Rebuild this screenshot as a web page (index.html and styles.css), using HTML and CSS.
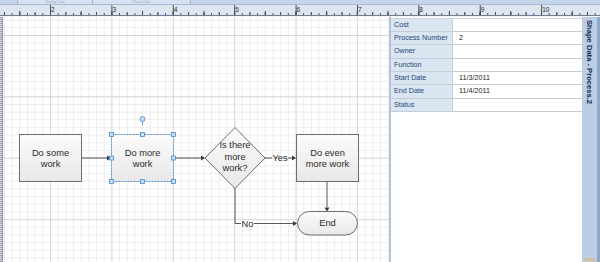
FILE: index.html
```html
<!DOCTYPE html>
<html>
<head>
<meta charset="utf-8">
<link rel="stylesheet" href="styles.css">
</head>
<body>
<div class="app">
  <div class="tabstrip">
    <div class="tab tab-a"><span>Display Data</span></div>
    <div class="tab tab-b"><span>Shape Data</span></div>
  </div>
  <div class="ruler">
    <div class="ruler-labels">
      <span>2</span><span>3</span><span>4</span><span>5</span><span>6</span><span>7</span><span>8</span><span>9</span><span>10</span>
    </div>
  </div>
  <div class="main">
    <div class="vruler"></div>
    <div class="canvas">
      <svg class="diagram" width="386" height="245" viewBox="3 17 386 245" xmlns="http://www.w3.org/2000/svg">
        <defs>
          <linearGradient id="fill" x1="0" y1="0" x2="0" y2="1">
            <stop offset="0" stop-color="#fbfbfb"/>
            <stop offset="1" stop-color="#e8e8e8"/>
          </linearGradient>
        </defs>
        <g class="conn">
          <line x1="81" y1="158" x2="107" y2="158"/>
          <line x1="173" y1="158" x2="201" y2="158"/>
          <line x1="265" y1="158" x2="272" y2="158"/>
          <line x1="288" y1="158" x2="292" y2="158"/>
          <line x1="327" y1="181" x2="327" y2="207"/>
          <polyline points="235,188 235,223.5 241,223.5"/>
          <line x1="254" y1="223.5" x2="293" y2="223.5"/>
        </g>
        <g class="arrow">
          <polygon points="107,155.5 111,158 107,160.5"/>
          <polygon points="201,155.5 205,158 201,160.5"/>
          <polygon points="292,155.5 296,158 292,160.5"/>
          <polygon points="324.5,207.5 327,211.5 329.5,207.5"/>
          <polygon points="293,221 297,223.5 293,226"/>
        </g>
        <rect class="shape" x="19.5" y="134.5" width="62" height="47"/>
        <rect class="shape sel" x="111.5" y="134.5" width="62" height="47"/>
        <polygon class="shape" points="235,127.5 265,158 235,188.5 205,158"/>
        <rect class="shape" x="296.5" y="134.5" width="62" height="47"/>
        <rect class="shape" x="297.5" y="211.5" width="60" height="23.5" rx="11.75" ry="11.75"/>

        <g class="label">
          <text x="50.5" y="155.8">Do some</text>
          <text x="50.5" y="167.2">work</text>
          <text x="142.5" y="155.8">Do more</text>
          <text x="142.5" y="167.2">work</text>
          <text x="235" y="147.8">Is there</text>
          <text x="235" y="159.6">more</text>
          <text x="235" y="171.2">work?</text>
          <text x="327.5" y="155.6">Do even</text>
          <text x="327.5" y="167">more work</text>
          <text x="327.5" y="226">End</text>
          <text x="280" y="161.4">Yes</text>
          <text x="247.5" y="226.8">No</text>
        </g>

        <g class="handles">
          <line class="stem" x1="142.5" y1="121.5" x2="142.5" y2="125"/>
          <circle cx="142.5" cy="119" r="2.5"/>
          <rect x="109.5" y="132.5" width="4" height="4"/>
          <rect x="140.5" y="132.5" width="4" height="4"/>
          <rect x="171.5" y="132.5" width="4" height="4"/>
          <rect x="109.5" y="156" width="4" height="4"/>
          <rect x="171.5" y="156" width="4" height="4"/>
          <rect x="109.5" y="179.5" width="4" height="4"/>
          <rect x="140.5" y="179.5" width="4" height="4"/>
          <rect x="171.5" y="179.5" width="4" height="4"/>
        </g>
      </svg>
    </div>
    <div class="panel">
      <div class="props">
        <div class="key">Cost</div><div class="val"></div>
        <div class="key">Process Number</div><div class="val">2</div>
        <div class="key">Owner</div><div class="val"></div>
        <div class="key">Function</div><div class="val"></div>
        <div class="key">Start Date</div><div class="val">11/3/2011</div>
        <div class="key">End Date</div><div class="val">11/4/2011</div>
        <div class="key">Status</div><div class="val"></div>
      </div>
    </div>
    <div class="sidebar">
      <span class="sidebar-title">Shape Data - Process.2</span>
      <span class="grip"></span>
    </div>
  </div>
</div>
</body>
</html>
```

FILE: styles.css
```css
html, body {
  margin: 0;
  padding: 0;
  background: #ffffff;
}

.app {
  width: 600px;
  height: 262px;
  overflow: hidden;
  display: flex;
  flex-direction: column;
  font-family: "Liberation Sans", Arial, sans-serif;
}

.tabstrip {
  height: 5px;
  flex: none;
  display: flex;
  background: #c5d5e9;
  padding-left: 17px;
  box-sizing: border-box;
  border-bottom: 1px solid #a9bbd3;
}

.tab {
  height: 4px;
  background: #d6e2f1;
  border-right: 1px solid #9fb2cc;
  color: #9aa9be;
  font-size: 3.4px;
  line-height: 4px;
  text-align: center;
  white-space: nowrap;
}
.tab span {
  display: block;
}
.tab-a { width: 74px; border-left: 1px solid #9fb2cc; }
.tab-b { width: 97px; }

.ruler {
  height: 10px;
  flex: none;
  border-bottom: 1px solid #6f7c8e;
  background-color: #dde6f0;
  background-image:
    linear-gradient(to right, #4a4a4a 1px, transparent 1px),
    linear-gradient(to right, #4a4a4a 1px, transparent 1px),
    linear-gradient(to right, #4a4a4a 1px, transparent 1px),
    linear-gradient(to right, #4a4a4a 1px, transparent 1px);
  background-size: 61.4px 100%, 30.7px 4px, 15.35px 3px, 7.675px 2px;
  background-position: 50px 0, 50px 100%, 50px 100%, 50px 100%;
  background-repeat: repeat-x;
}

.ruler-labels {
  display: flex;
  padding-left: 51px;
  height: 10px;
}
.ruler-labels span {
  flex: none;
  width: 61.4px;
  font-size: 6.5px;
  line-height: 7px;
  color: #2a2a2a;
  padding-top: 0.5px;
}

.main {
  flex: 1;
  display: flex;
  border-top: 1px solid #f2f5f9;
  min-height: 0;
}

.vruler {
  width: 2px;
  flex: none;
  border-right: 1px solid #8e98a6;
  background-image: repeating-linear-gradient(to bottom, #9aa3ae 0, #9aa3ae 1px, #d9dee5 1px, #d9dee5 2px);
}

.canvas {
  width: 386px;
  flex: none;
  overflow: hidden;
  background-color: #ffffff;
  background-image:
    linear-gradient(to right, #d9d9d9 1px, transparent 1px),
    linear-gradient(to bottom, #d9d9d9 1px, transparent 1px),
    linear-gradient(to right, #ededed 1px, transparent 1px),
    linear-gradient(to bottom, #ededed 1px, transparent 1px);
  background-size: 61.4px 100%, 100% 61.4px, 7.675px 100%, 100% 7.675px;
  background-position: 47px 0, 0 18px, 1px 0, 0 2.5px;
}

.diagram {
  display: block;
}

.conn line, .conn polyline {
  stroke: #5a5a5a;
  stroke-width: 1;
  fill: none;
}
.arrow polygon {
  fill: #3a3a3a;
}

.shape {
  fill: url(#fill);
  stroke: #6c6c6c;
  stroke-width: 1;
}
.shape.sel {
  stroke: #5b8fc9;
  stroke-dasharray: 2 1;
}

.label text {
  font-family: "Liberation Sans", Arial, sans-serif;
  font-size: 9.3px;
  fill: #2b2b2b;
  text-anchor: middle;
}

.handles rect, .handles circle {
  fill: #c5def5;
  stroke: #4b8ccb;
  stroke-width: 0.8;
}
.handles .stem {
  stroke: #4b8ccb;
  stroke-width: 0.8;
}

.panel {
  width: 191px;
  flex: none;
  border-left: 2px solid #b3c3d9;
  background: #ffffff;
}

.props {
  display: grid;
  grid-template-columns: 62px 1fr;
  grid-auto-rows: 13.35px;
  margin-top: 0.5px;
  border-top: 1px solid #c9d2dd;
}

.key, .val {
  box-sizing: border-box;
  font-size: 7.2px;
  line-height: 12px;
  padding-left: 3px;
  border-bottom: 1px solid #c3ccd7;
  white-space: nowrap;
  overflow: hidden;
}
.key {
  background: #dae5f2;
  color: #1f4677;
  border-right: 1px solid #c7d2df;
}
.val {
  background: #ffffff;
  color: #1e1e1e;
  padding-left: 6px;
}

.sidebar {
  width: 15px;
  flex: none;
  background: #bccee5;
  border-right: 3px solid #8ea8cc;
  display: flex;
  flex-direction: column;
  align-items: center;
  justify-content: space-between;
  padding-top: 3px;
}

.sidebar-title {
  writing-mode: vertical-rl;
  font-size: 7.6px;
  font-weight: bold;
  color: #17294a;
  line-height: 15px;
  white-space: nowrap;
}

.grip {
  width: 10px;
  height: 3px;
  background: #d2c29b;
  margin-bottom: 1px;
}
```
